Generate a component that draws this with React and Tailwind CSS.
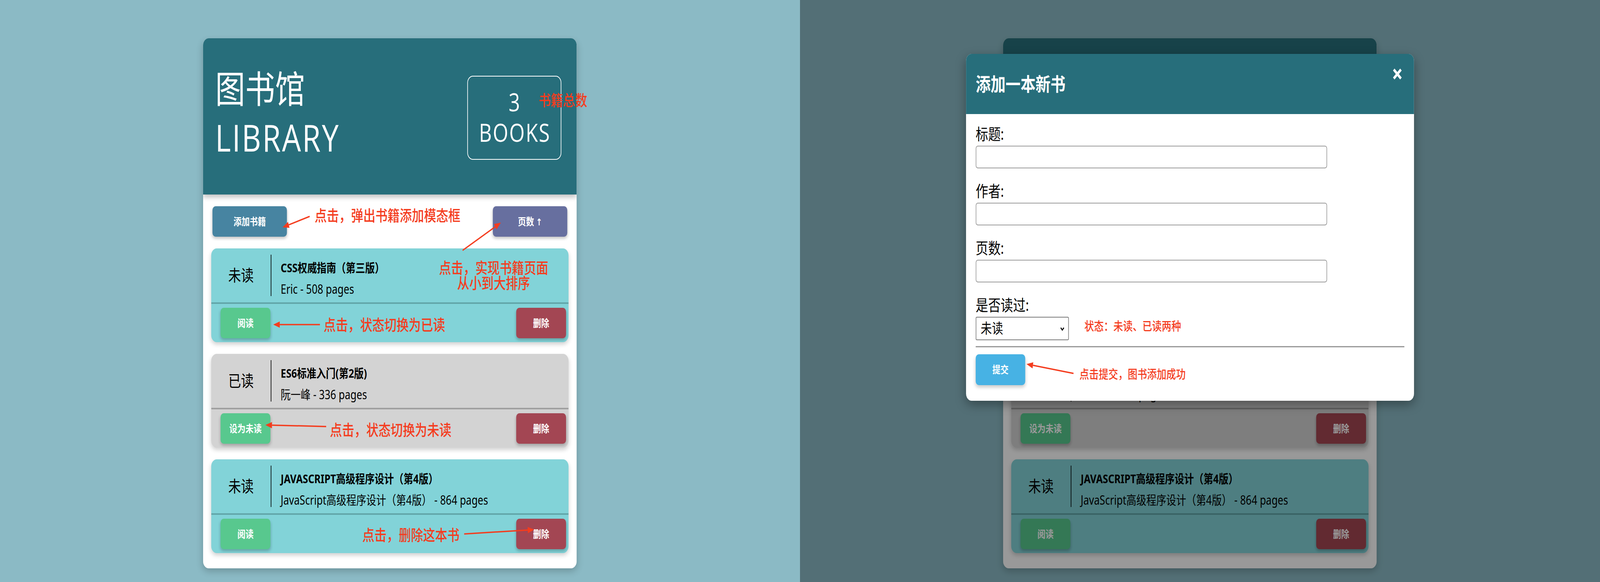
import React from 'react';

const SANS = "font-['Noto_Sans','DejaVu_Sans','Noto_Sans_CJK_SC',sans-serif]";
const HEAD = "font-['Open_Sans','Noto_Sans_CJK_SC',sans-serif]";
const NOTE = "font-['Noto_Sans_CJK_SC',sans-serif]";
const RED = '#f43c1e';

const books = [
  { status: '未读', title: 'CSS权威指南（第三版）', author: 'Eric', pages: 508, read: false },
  { status: '已读', title: 'ES6标准入门(第2版)', author: '阮一峰', pages: 336, read: true },
  {
    status: '未读',
    title: 'JAVASCRIPT高级程序设计（第4版）',
    author: 'JavaScript高级程序设计（第4版）',
    pages: 864,
    read: false,
  },
];

const Arrow = ({ x1, y1, x2, y2 }) => {
  const a = Math.atan2(y2 - y1, x2 - x1);
  const L = 21;
  const W = 8;
  const bx = x2 - L * Math.cos(a);
  const by = y2 - L * Math.sin(a);
  const px = -Math.sin(a) * W;
  const py = Math.cos(a) * W;
  return (
    <g>
      <line x1={x1} y1={y1} x2={bx} y2={by} stroke={RED} strokeWidth="3.5" />
      <polygon points={`${x2},${y2} ${bx + px},${by + py} ${bx - px},${by - py}`} fill={RED} />
    </g>
  );
};

const Note = ({ className, children }) => (
  <div
    className={`absolute z-20 whitespace-nowrap leading-none font-medium text-[#f43c1e] ${NOTE} ${className}`}
  >
    {children}
  </div>
);

const BookCard = ({ book }) => (
  <div
    className={`rounded-[18px] overflow-hidden shadow-[0_6px_12px_rgba(0,0,0,0.18)] ${
      book.read ? 'bg-[#d3d3d3]' : 'bg-[#82d3d8]'
    }`}
  >
    <div className="flex h-[138px] py-[16px]">
      <div className="w-[193px] shrink-0 border-r-2 border-black flex items-center justify-center text-[41px] text-black">
        {book.status}
      </div>
      <div className="pl-[30px] pt-[15px] text-black">
        <div className="w-fit text-[31px] font-bold leading-[36px]">{book.title}</div>
        <div className="w-fit text-[32px] leading-[36px] mt-[19px]">
          {book.author} - {book.pages} pages
        </div>
      </div>
    </div>
    <div
      className={`flex items-center justify-between h-[102px] border-t-4 pl-[30px] pr-[8px] ${
        book.read ? 'border-[#a0a0a0]' : 'border-[#62a6a9]'
      }`}
    >
      <button className="w-[160px] h-[78px] rounded-[10px] bg-[#58c88e] text-white font-bold text-[26px] shadow-[0_5px_8px_rgba(0,0,0,0.22)]">
        {book.read ? '设为未读' : '阅读'}
      </button>
      <button className="w-[160px] h-[78px] rounded-[10px] bg-[#a34653] text-white font-bold text-[26px] shadow-[0_5px_8px_rgba(0,0,0,0.22)]">
        删除
      </button>
    </div>
  </div>
);

const Library = () => (
  <div className={`ml-[652px] mt-[98px] w-[1199px] rounded-[18px] overflow-hidden bg-white shadow-[0_8px_20px_rgba(0,0,0,0.2)] ${SANS}`}>
    <header className="h-[400px] bg-[#276e7b] flex justify-between pl-[39px] pr-[49px] shadow-[0_8px_12px_rgba(0,0,0,0.22)]">
      <div className={`pt-[65px] text-white text-[96px] leading-[125px] font-normal ${HEAD}`}>
        <div>图书馆</div>
        <div className="tracking-[4px]">LIBRARY</div>
      </div>
      <div
        className={`mt-[96px] w-[302px] h-[215px] border-2 border-white rounded-[18px] flex flex-col items-center pt-[26px] text-white text-[64px] leading-[78px] font-normal ${HEAD}`}
      >
        <div>3</div>
        <div className="tracking-[3px] pl-[3px]">BOOKS</div>
      </div>
    </header>
    <div className="px-[26px] pt-[30px] pb-[39px]">
      <div className="flex justify-between px-[4px]">
        <button className="w-[239px] h-[78px] rounded-[10px] bg-[#4784a1] text-white font-bold text-[26px] shadow-[0_5px_8px_rgba(0,0,0,0.22)]">
          添加书籍
        </button>
        <button className="w-[239px] h-[78px] rounded-[10px] bg-[#676f9f] text-white font-bold text-[26px] shadow-[0_5px_8px_rgba(0,0,0,0.22)]">
          页数<span className="text-[24px] ml-[6px]">↑</span>
        </button>
      </div>
      <div className="mt-[30px] flex flex-col gap-[30px]">
        {books.map((b) => (
          <BookCard key={b.title} book={b} />
        ))}
      </div>
    </div>
  </div>
);

const Field = ({ label }) => (
  <div className="mb-[28px]">
    <label className="block w-fit text-[40px] leading-[60px] text-black">{label}</label>
    <input className="block w-[1128px] h-[58px] border-2 border-[#9b9b9b] rounded-[7px] bg-white" />
  </div>
);

const Modal = () => (
  <div className={`absolute z-40 left-[533px] top-[138px] w-[1438px] h-[888px] bg-white rounded-[18px] overflow-hidden shadow-[0_10px_30px_rgba(0,0,0,0.35)] ${SANS}`}>
    <div className="relative h-[154px] bg-[#276e7b] flex items-center pl-[31px]">
      <h2 className="text-white text-[48px] font-bold leading-none">添加一本新书</h2>
      <svg className="absolute right-[38px] top-[36px]" width="31" height="31" viewBox="0 0 31 31">
        <path d="M4 4 L27 27 M27 4 L4 27" stroke="white" strokeWidth="7" strokeLinecap="butt" />
      </svg>
    </div>
    <div className="px-[31px] pt-[21px]">
      <Field label="标题:" />
      <Field label="作者:" />
      <Field label="页数:" />
      <div>
        <label className="block w-fit text-[40px] leading-[60px] text-black">是否读过:</label>
        <div className="relative w-[299px] h-[60px] border-2 border-[#7a7a7a] rounded-[4px] flex items-center pl-[14px] text-[36px] text-black">
          未读
          <svg className="absolute right-[12px] top-[24px]" width="14" height="11" viewBox="0 0 14 11">
            <path d="M2 2 L7 8 L12 2" stroke="black" strokeWidth="3" fill="none" />
          </svg>
        </div>
      </div>
      <div className="mt-[15px] h-[3px] bg-[#9a9a9a]" />
      <div className="h-[1px] bg-[#ececec]" />
      <button className="mt-[17px] w-[159px] h-[79px] rounded-[10px] bg-[#47b2e4] text-white font-bold text-[26px] shadow-[0_6px_10px_rgba(0,0,0,0.2)]">
        提交
      </button>
    </div>
    <Note className="left-[380px] top-[679px] text-[31px]">状态：未读、已读两种</Note>
    <Note className="left-[364px] top-[802px] text-[31px]">点击提交，图书添加成功</Note>
    <svg className="absolute z-20 inset-0 pointer-events-none" width="1438" height="888">
      <Arrow x1={345} y1={818} x2={194} y2={794} />
    </svg>
  </div>
);

const Page = ({ notes, children }) => (
  <div className="relative w-[2568px] h-[1490px] shrink-0 bg-[#8bbac5] overflow-hidden">
    <Library />
    {notes && (
      <>
        <Note className="left-[1729px] top-[235px] text-[39px]">书籍总数</Note>
        <Note className="left-[1010px] top-[530px] text-[39px]">点击，弹出书籍添加模态框</Note>
        <Note className="left-[1409px] top-[664px] w-[351px] text-center text-[39px] leading-[47px]">
          点击，实现书籍页面
          <br />
          从小到大排序
        </Note>
        <Note className="left-[1039px] top-[810px] text-[39px]">点击，状态切换为已读</Note>
        <Note className="left-[1059px] top-[1079px] text-[39px]">点击，状态切换为未读</Note>
        <Note className="left-[1163px] top-[1348px] text-[39px]">点击，删除这本书</Note>
        <svg className="absolute z-20 inset-0 pointer-events-none" width="2568" height="1490">
          <Arrow x1={994} y1={554} x2={907} y2={582} />
          <Arrow x1={1485} y1={641} x2={1608} y2={570} />
          <Arrow x1={1027} y1={831} x2={877} y2={831} />
          <Arrow x1={1047} y1={1092} x2={852} y2={1088} />
          <Arrow x1={1490} y1={1367} x2={1715} y2={1356} />
        </svg>
      </>
    )}
    {children}
  </div>
);

export default function App() {
  // the frame can come out narrower than the 5136px design; squeeze to fit it
  const sx = typeof window !== 'undefined' ? Math.min(1, window.innerWidth / 5136) : 1;
  return (
    <div className="w-screen h-[1490px] overflow-hidden">
      <div
        className="flex w-[5136px] h-[1490px] origin-top-left"
        style={{ transform: `scaleX(${sx})` }}
      >
        <Page notes />
        <Page>
          <div className="absolute inset-0 z-30 bg-black/40" />
          <Modal />
        </Page>
      </div>
    </div>
  );
}
